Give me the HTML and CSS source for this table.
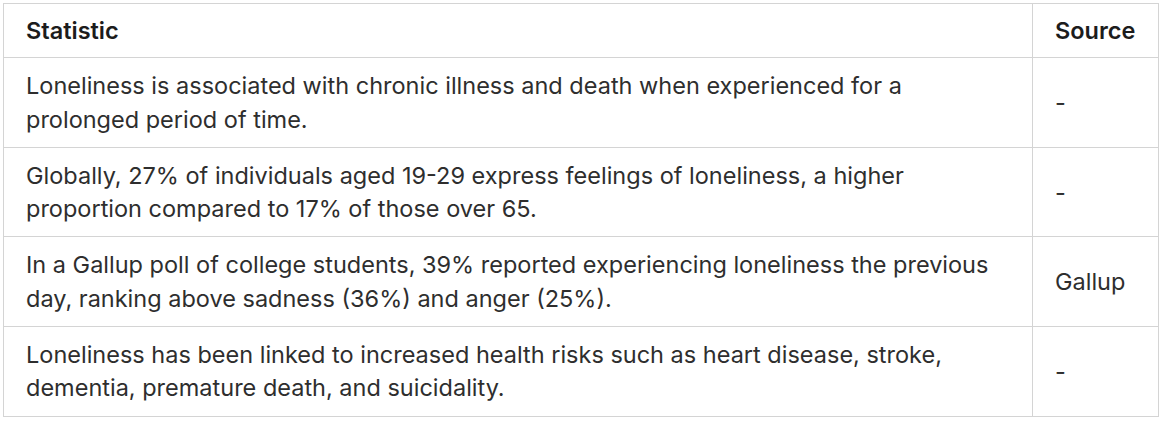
FILE: index.html
```html
<!DOCTYPE html>
<html lang="en">
<head>
<meta charset="utf-8">
<link rel="stylesheet" href="styles.css">
</head>
<body>
<table class="stats">
  <colgroup><col class="col-stat"><col class="col-src"></colgroup>
  <thead>
    <tr><th>Statistic</th><th>Source</th></tr>
  </thead>
  <tbody>
    <tr><td>Loneliness is associated with chronic illness and death when experienced for a prolonged period of time.</td><td>-</td></tr>
    <tr><td>Globally, 27% of individuals aged 19-29 express feelings of loneliness, a higher proportion compared to 17% of those over 65.</td><td>-</td></tr>
    <tr><td>In a Gallup poll of college students, 39% reported experiencing loneliness the previous day, ranking above sadness (36%) and anger (25%).</td><td>Gallup</td></tr>
    <tr><td>Loneliness has been linked to increased health risks such as heart disease, stroke, dementia, premature death, and suicidality.</td><td>-</td></tr>
  </tbody>
</table>
</body>
</html>
```

FILE: styles.css
```css
html, body {
  margin: 0;
  background: #ffffff;
}
body {
  padding: 3px 0 0 3px;
  font-family: Inter, "Liberation Sans", sans-serif;
}
.stats {
  border-collapse: collapse;
  width: 1155px;
  table-layout: fixed;
  color: #2e2e2e;
  font-size: 23.5px;
  line-height: 33.3px;
}
.col-stat { width: 1029px; }
.col-src { width: 126px; }
.stats th, .stats td {
  border: 1px solid #d4d4d4;
  text-align: left;
  vertical-align: middle;
  padding: 11px 22px;
}
.stats th {
  font-weight: 600;
  color: #1c1c1c;
  padding: 10px 22px;
}
```
